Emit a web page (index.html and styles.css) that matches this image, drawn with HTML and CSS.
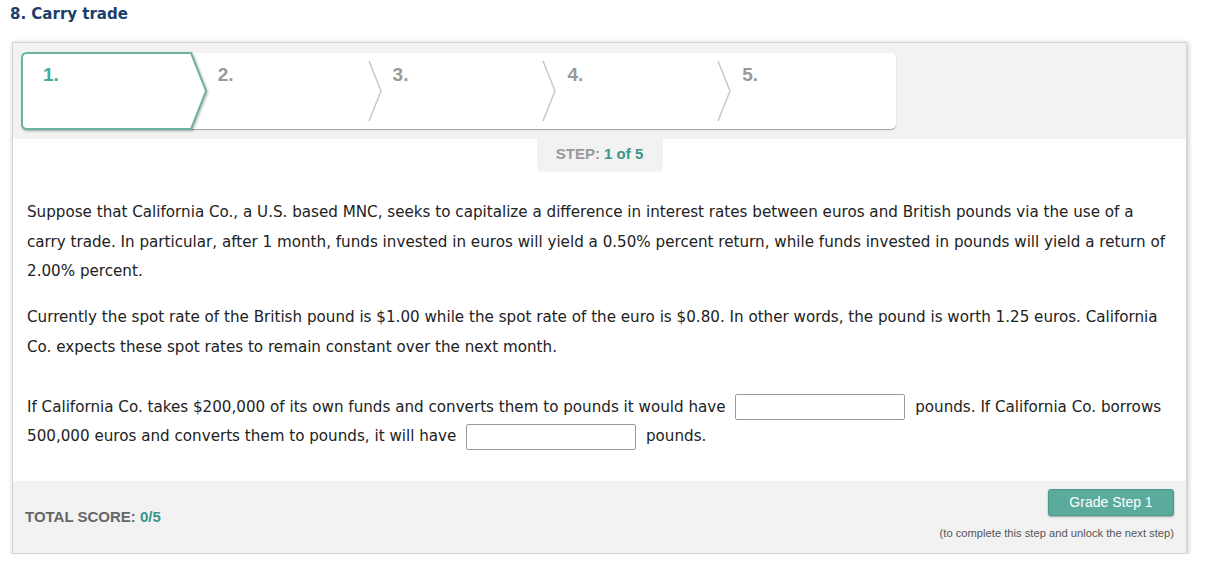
FILE: index.html
```html
<!DOCTYPE html>
<html lang="en">
<head>
  <meta charset="UTF-8" />
  <title>Carry trade</title>
  <link rel="stylesheet" href="styles.css">
</head>
<body>

  <h2 class="question-title">8. Carry trade</h2>

  <div class="problem">
    <div class="step-bar">
      <div class="steps">
        <div class="step active">
          <svg class="tab-shape" width="190" height="78" viewBox="0 0 190 78">
            <path d="M6 1 H170 L185 39 L170 77 H6 Q1 77 1 72 V6 Q1 1 6 1 Z" fill="#fff" stroke="#6bb3a2" stroke-width="2"/>
          </svg>
          <span class="num">1.</span>
        </div>
        <div class="step"><span class="num">2.</span></div>
        <div class="step">
          <svg class="chevron" width="16" height="62" viewBox="0 0 16 62"><path d="M1 1 L13 31 L1 61" fill="none" stroke="#c8c8c8" stroke-width="1.5"/></svg>
          <span class="num">3.</span>
        </div>
        <div class="step">
          <svg class="chevron" width="16" height="62" viewBox="0 0 16 62"><path d="M1 1 L13 31 L1 61" fill="none" stroke="#c8c8c8" stroke-width="1.5"/></svg>
          <span class="num">4.</span>
        </div>
        <div class="step">
          <svg class="chevron" width="16" height="62" viewBox="0 0 16 62"><path d="M1 1 L13 31 L1 61" fill="none" stroke="#c8c8c8" stroke-width="1.5"/></svg>
          <span class="num">5.</span>
        </div>
      </div>
    </div>

    <div class="content">
      <div class="step-label">STEP: <span>1 of 5</span></div>

      <p>Suppose that California Co., a U.S. based MNC, seeks to capitalize a difference in interest rates between euros and British pounds via the use of a carry trade. In particular, after 1 month, funds invested in euros will yield a 0.50% percent return, while funds invested in pounds will yield a return of 2.00% percent.</p>

      <p>Currently the spot rate of the British pound is $1.00 while the spot rate of the euro is $0.80. In other words, the pound is worth 1.25 euros. California Co. expects these spot rates to remain constant over the next month.</p>

      <p class="question">If California Co. takes $200,000 of its own funds and converts them to pounds it would have <input type="text" class="answer"> pounds. If California Co. borrows 500,000 euros and converts them to pounds, it will have <input type="text" class="answer"> pounds.</p>
    </div>

    <div class="footer">
      <div class="score">TOTAL SCORE: <span>0/5</span></div>
      <div class="grade">
        <button>Grade Step 1</button>
        <small>(to complete this step and unlock the next step)</small>
      </div>
    </div>
  </div>

</body>
</html>
```

FILE: styles.css
```css
body {
  margin: 0;
  padding: 6px 24px 0 12px;
  font-family: 'DejaVu Sans', Verdana, sans-serif;
  background: #fff;
}

.question-title {
  margin: 0 0 19px -2px;
  font-size: 15px;
  font-weight: bold;
  color: #1b3e6a;
  line-height: 17px;
}

.problem {
  border: 1px solid #d4d4d4;
  box-shadow: 1px 1px 5px rgba(0, 0, 0, 0.25);
  background: #fff;
}

.step-bar {
  background: #f2f2f2;
  padding: 10px 10px 10px 9px;
}

.steps {
  display: flex;
  width: 874px;
  height: 76px;
  background: #fff;
  border-radius: 5px;
  box-shadow: 0 1px 1px rgba(0, 0, 0, 0.35);
}

.step {
  position: relative;
  width: 176px;
  padding: 11px 0 0 21px;
  box-sizing: border-box;
}

.step .num {
  position: relative;
  font-family: 'Liberation Sans', Arial, sans-serif;
  font-weight: bold;
  font-size: 19px;
  color: #999;
}

.step.active .num {
  color: #3cae9b;
}

.tab-shape {
  position: absolute;
  left: -1px;
  top: -1px;
  filter: drop-shadow(1px 1px 1px rgba(0, 0, 0, 0.3));
}

.chevron {
  position: absolute;
  left: -4px;
  top: 7px;
}

.content {
  padding: 0 14px 29px 14px;
}

.step-label {
  width: 126px;
  margin: 0 auto 26px;
  padding: 6px 0 9px;
  background: #f2f2f2;
  border-radius: 0 0 5px 5px;
  text-align: center;
  font-family: 'Liberation Sans', Arial, sans-serif;
  font-weight: bold;
  font-size: 15px;
  line-height: 18px;
  color: #999;
}

.step-label span {
  color: #3a9688;
}

.content p {
  margin: 0 0 16.5px 0;
  font-size: 15.15px;
  line-height: 29.5px;
  color: #222;
}

.content p.question {
  margin-top: 30.5px;
  margin-bottom: 0;
}

.answer {
  width: 170px;
  height: 26px;
  box-sizing: border-box;
  border: 1px solid #999;
  border-radius: 2px;
  margin: 0 5px;
  vertical-align: middle;
  font-size: 14px;
}

.footer {
  background: #f2f2f2;
  display: flex;
  justify-content: space-between;
  padding: 8px 12px 14px 12px;
}

.score {
  align-self: center;
  margin-top: 6px;
  font-family: 'Liberation Sans', Arial, sans-serif;
  font-weight: bold;
  font-size: 15px;
  color: #666;
}

.score span {
  color: #3a9688;
}

.grade {
  display: flex;
  flex-direction: column;
  align-items: flex-end;
}

.grade button {
  width: 126px;
  height: 27px;
  background: #5aab9b;
  color: #fff;
  border: 1px solid #4b9a8b;
  border-radius: 3px;
  box-shadow: 0 1px 2px rgba(0, 0, 0, 0.35);
  font-family: 'Liberation Sans', Arial, sans-serif;
  font-size: 14px;
  cursor: pointer;
}

.grade small {
  margin-top: 11px;
  font-family: 'Liberation Sans', Arial, sans-serif;
  font-size: 11.2px;
  color: #555;
}
```
